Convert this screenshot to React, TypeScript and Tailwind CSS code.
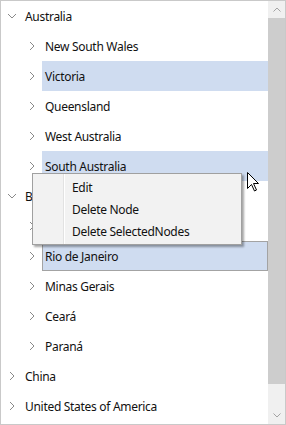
import React from 'react';

type Node = { label: string; level: number; expanded?: boolean; selected?: boolean; focused?: boolean };

const nodes: Node[] = [
    { label: 'Australia', level: 0, expanded: true },
    { label: 'New South Wales', level: 1 },
    { label: 'Victoria', level: 1, selected: true },
    { label: 'Queensland', level: 1 },
    { label: 'West Australia', level: 1 },
    { label: 'South Australia', level: 1, selected: true },
    { label: 'Brazil', level: 0, expanded: true },
    { label: 'São Paulo', level: 1 },
    { label: 'Rio de Janeiro', level: 1, selected: true, focused: true },
    { label: 'Minas Gerais', level: 1 },
    { label: 'Ceará', level: 1 },
    { label: 'Paraná', level: 1 },
    { label: 'China', level: 0 },
    { label: 'United States of America', level: 0 },
];

const Chevron = ({ down }: { down?: boolean }) => (
    <svg width="10" height="10" viewBox="0 0 10 10" className="text-[#8a8a8a]">
        {down ? (
            <path d="M1 3 L5 7 L9 3" fill="none" stroke="currentColor" strokeWidth="1" />
        ) : (
            <path d="M3 1 L7 5 L3 9" fill="none" stroke="currentColor" strokeWidth="1" />
        )}
    </svg>
);

const TreeRow = ({ node }: { node: Node }) => {
    const content = node.focused
        ? 'bg-[#cfdcf0] border border-[#a3a3a3]'
        : node.selected
          ? 'bg-[#cfdcf0] border border-transparent'
          : 'border border-transparent';
    return (
        <div className="flex h-[30px] items-stretch" style={{ paddingLeft: node.level * 20 }}>
            <div className="w-[21px] shrink-0 flex items-center justify-center">
                <Chevron down={node.expanded} />
            </div>
            <div className={`flex-1 flex items-center pl-[2px] pt-[2px] ${content}`}>
                <span className="whitespace-nowrap">{node.label}</span>
            </div>
        </div>
    );
};

export default function App() {
    return (
        <div
            className="relative w-[286px] h-[425px] border border-[#c9c9c9] bg-white flex overflow-hidden text-[12px] tracking-[-0.3px] text-[#111]"
            style={{ fontFamily: '"Noto Sans", "Open Sans", sans-serif' }}
        >
            <div className="flex-1 min-w-0 overflow-hidden">
                {nodes.map((n) => (
                    <TreeRow key={n.label} node={n} />
                ))}
            </div>

            <div className="w-[17px] shrink-0 bg-[#f0f0f0] flex flex-col">
                <div className="h-[17px] flex items-center justify-center">
                    <svg width="8" height="5" viewBox="0 0 8 5">
                        <path d="M0.5 4.5 L4 1 L7.5 4.5" fill="none" stroke="#a3a3a3" strokeWidth="1" />
                    </svg>
                </div>
                <div className="h-[366px] bg-[#cdcdcd]" />
                <div className="flex-1" />
                <div className="h-[17px] flex items-center justify-center">
                    <svg width="8" height="5" viewBox="0 0 8 5">
                        <path d="M0.5 0.5 L4 4 L7.5 0.5" fill="none" stroke="#a3a3a3" strokeWidth="1" />
                    </svg>
                </div>
            </div>

            <div className="absolute left-[31px] top-[172px] w-[210px] bg-[#f2f2f2] border border-[#a0a0a0] shadow-[2px_2px_2px_rgba(0,0,0,0.35)] py-[2px]">
                <div className="absolute left-[30px] top-0 bottom-0 w-px bg-[#e2e2e2]" />
                <div className="absolute left-[31px] top-0 bottom-0 w-px bg-white" />
                {['Edit', 'Delete Node', 'Delete SelectedNodes'].map((item) => (
                    <div key={item} className="relative h-[22px] flex items-center pl-[39px] pt-[1px]">
                        {item}
                    </div>
                ))}
            </div>

            <svg className="absolute left-[246px] top-[171px]" width="13" height="20" viewBox="0 0 13 20">
                <path
                    d="M0.5 0.5 L0.5 16.5 L4.5 12.5 L7.5 19 L9.5 18 L6.5 11.5 L11.5 11.5 Z"
                    fill="white"
                    stroke="black"
                    strokeWidth="1"
                    strokeLinejoin="round"
                />
            </svg>
        </div>
    );
}
